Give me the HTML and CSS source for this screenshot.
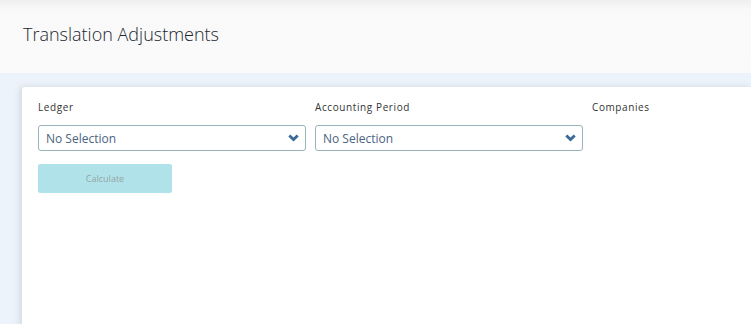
FILE: index.html
```html
<!DOCTYPE html>
<html lang="en">
<head>
    <meta charset="UTF-8">
    <title>Translation Adjustments</title>
    <link rel="stylesheet" href="styles.css">
</head>
<body>
    <header class="page-header">
        <h1>Translation Adjustments</h1>
    </header>
    <main class="content">
        <div class="card">
            <div class="fields">
                <div class="field">
                    <label>Ledger</label>
                    <div class="select">
                        <span>No Selection</span>
                        <svg width="11" height="8" viewBox="0 0 11 8"><path d="M0.3 2.4 L2.3 0.4 L5.5 3.6 L8.7 0.4 L10.7 2.4 L5.5 7.6 Z" fill="#3b6a9b"/></svg>
                    </div>
                </div>
                <div class="field">
                    <label>Accounting Period</label>
                    <div class="select">
                        <span>No Selection</span>
                        <svg width="11" height="8" viewBox="0 0 11 8"><path d="M0.3 2.4 L2.3 0.4 L5.5 3.6 L8.7 0.4 L10.7 2.4 L5.5 7.6 Z" fill="#3b6a9b"/></svg>
                    </div>
                </div>
                <div class="field">
                    <label>Companies</label>
                </div>
            </div>
            <button class="calculate" disabled>Calculate</button>
        </div>
    </main>
</body>
</html>
```
FILE: styles.css
```css
* {
    margin: 0;
    padding: 0;
    box-sizing: border-box;
}

body {
    font-family: "Open Sans", Arial, sans-serif;
    background: #edf3fa;
    height: 324px;
    overflow: hidden;
}

.page-header {
    height: 73px;
    background: linear-gradient(#efefef, #f9f9f9 10px, #fafafa);
    padding: 22px 23px 0;
}

.page-header h1 {
    font-family: "Open Sans", sans-serif;
    font-weight: 300;
    font-size: 18px;
    color: #22262e;
}

.content {
    padding: 14px 0 0 22px;
}

.card {
    background: #fff;
    height: 240px;
    border-radius: 3px 0 0 0;
    box-shadow: -2px 0 6px rgba(120, 130, 150, 0.25);
    padding: 13px 16px;
}

.fields {
    display: grid;
    grid-template-columns: 268px 268px 1fr;
    gap: 9px;
}

.field label {
    display: block;
    font-size: 10px;
    letter-spacing: 0.6px;
    color: #333;
    height: 16px;
    margin-bottom: 9px;
}

.select {
    height: 26px;
    border: 1px solid #97b3b8;
    border-radius: 3px;
    display: flex;
    align-items: center;
    justify-content: space-between;
    padding: 0 6px 0 7px;
    font-size: 12px;
    color: #4a6480;
}

.calculate {
    margin-top: 13px;
    width: 134px;
    height: 29px;
    border: none;
    border-radius: 2px;
    background: #b0e3e9;
    color: #97a3a6;
    font-family: "Open Sans", sans-serif;
    font-size: 9px;
}
```
